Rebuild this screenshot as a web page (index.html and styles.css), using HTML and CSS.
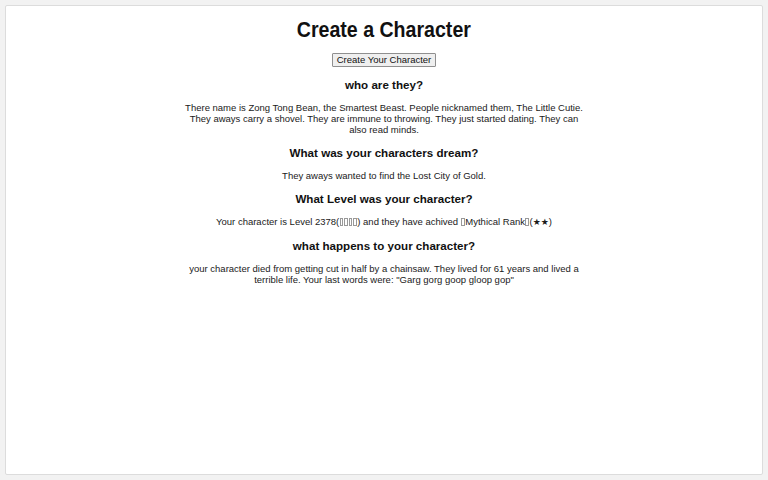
FILE: index.html
```html
<!DOCTYPE html>
<html lang="en">

<head>
    <meta charset="UTF-8">
    <title>Create a Character</title>
    <link rel="stylesheet" href="styles.css">
</head>

<body>
    <div id="page">
        <h1>Create a Character</h1>
        <button id="create-button" class="buttons">Create Your Character</button>
        <div id="results">
            <h2>who are they?</h2>
            <p class="answer">There name is Zong Tong Bean, the Smartest Beast. People nicknamed them, The Little Cutie. They aways carry a shovel. They are immune to throwing. They just started dating. They can also read minds.</p>
            <h2>What was your characters dream?</h2>
            <p class="answer">They aways wanted to find the Lost City of Gold.</p>
            <h2>What Level was your character?</h2>
            <p class="answer">Your character is Level 2378(<span class="missing"></span><span class="missing"></span><span class="missing"></span><span class="missing"></span>) and they have achived <span class="missing"></span>Mythical Rank<span class="missing"></span>(<span class="stars">★★</span>)</p>
            <h2>what happens to your character?</h2>
            <p class="answer">your character died from getting cut in half by a chainsaw. They lived for 61 years and lived a terrible life. Your last words were: "Garg gorg goop gloop gop"</p>
        </div>
    </div>
</body>

</html>
```

FILE: styles.css
```css
* {
    margin: 0;
    padding: 0;
    box-sizing: border-box;
}

html,
body {
    height: 100%;
}

body {
    font-family: 'Liberation Sans', Arial, sans-serif;
    background-color: #f2f2f2;
    padding: 5px;
}

#page {
    height: 100%;
    background-color: #fff;
    border: 1px solid #dcdcdc;
    border-radius: 2px;
    display: flex;
    flex-direction: column;
    align-items: center;
    text-align: center;
    color: #111;
}

h1 {
    font-size: 22px;
    font-weight: bold;
    margin-top: 11px;
    line-height: 26px;
    transform: scaleX(0.89);
}

#create-button {
    font-family: 'Liberation Sans', sans-serif;
    font-size: 9.5px;
    padding: 0 4px;
    margin-top: 10px;
    height: 14px;
    line-height: 12px;
    color: #111;
    background-color: #efefef;
    border: 1px solid #8f8f8f;
    border-radius: 1px;
}

#results {
    width: 402px;
    display: flex;
    flex-direction: column;
    align-items: center;
}

h2 {
    font-size: 11.6px;
    font-weight: bold;
    line-height: 14px;
    margin-top: 10px;
    margin-bottom: 10px;
}

h2:first-child {
    margin-top: 11px;
}

.answer {
    font-size: 9.5px;
    line-height: 11px;
    color: #1a1a1a;
}

.answer + h2 {
    margin-top: 11px;
}

/* glyphs the font can't draw show up as empty boxes */
.missing {
    display: inline-block;
    width: 3.5px;
    height: 8px;
    border: 1px solid #999;
    margin: 0 0.5px;
    vertical-align: -1px;
}

.stars {
    font-family: 'DejaVu Sans', sans-serif;
    font-size: 9px;
}
```
